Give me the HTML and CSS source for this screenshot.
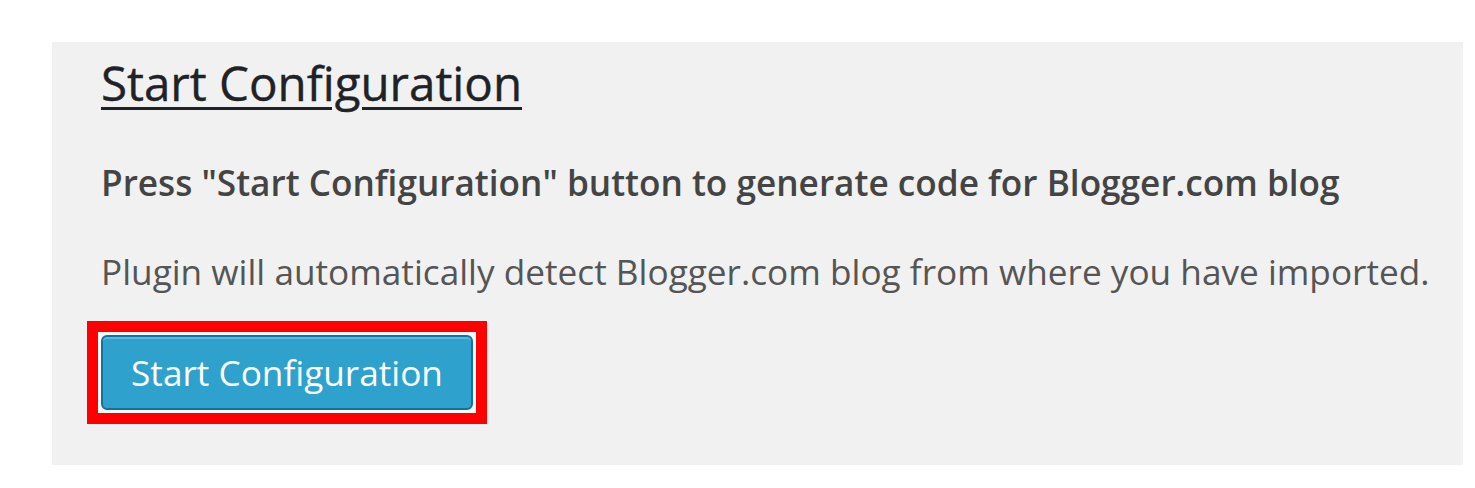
FILE: index.html
```html
<!DOCTYPE html>
<html lang="en">
<head>
<meta charset="utf-8">
<title>Start Configuration</title>
<link rel="stylesheet" href="styles.css">
</head>
<body>
<div class="panel">
  <h2 class="title">Start Configuration</h2>
  <p class="lead">Press "Start Configuration" button to generate code for Blogger.com blog</p>
  <p class="note">Plugin will automatically detect Blogger.com blog from where you have imported.</p>
  <div class="highlight">
    <button class="btn-primary" type="button">Start Configuration</button>
  </div>
</div>
</body>
</html>
```
FILE: styles.css
```css
html, body {
  margin: 0;
  padding: 0;
  background: #ffffff;
}

body {
  font-family: "Open Sans", "Noto Sans", sans-serif;
  color: #444444;
}

.panel {
  box-sizing: border-box;
  margin: 42px 0 0 52px;
  width: 1411px;
  height: 423px;
  background: #f1f1f1;
  padding: 9px 0 0 49px;
  display: flex;
  flex-direction: column;
  align-items: flex-start;
}

.title {
  margin: 0;
  font-size: 47.5px;
  font-weight: 400;
  color: #1f2226;
  text-decoration: underline;
  text-decoration-thickness: 3px;
  text-underline-offset: 6px;
  line-height: 1.362;
  -webkit-text-stroke: 0.4px #1f2226;
}

.lead {
  margin: 43px 0 0 0;
  font-size: 35.2px;
  font-weight: 600;
  line-height: 1.362;
  color: #444444;
}

.note {
  margin: 41px 0 0 0;
  font-size: 35.2px;
  font-weight: 400;
  line-height: 1.362;
  color: #555555;
}

.highlight {
  margin: 25px 0 0 -14px;
  border: 11px solid #ff0000;
  padding: 3px;
  background: #f8f8f8;
  display: flex;
}

.btn-primary {
  box-sizing: border-box;
  width: 372px;
  height: 75px;
  margin: 0;
  padding: 0;
  border: 2px solid #0e75a0;
  border-radius: 6px;
  background: #2ea2cc;
  box-shadow: inset 0 2px 0 rgba(120, 200, 230, 0.6);
  color: #ffffff;
  font-family: "Open Sans", "Noto Sans", sans-serif;
  font-size: 35.2px;
  font-weight: 400;
}
```
